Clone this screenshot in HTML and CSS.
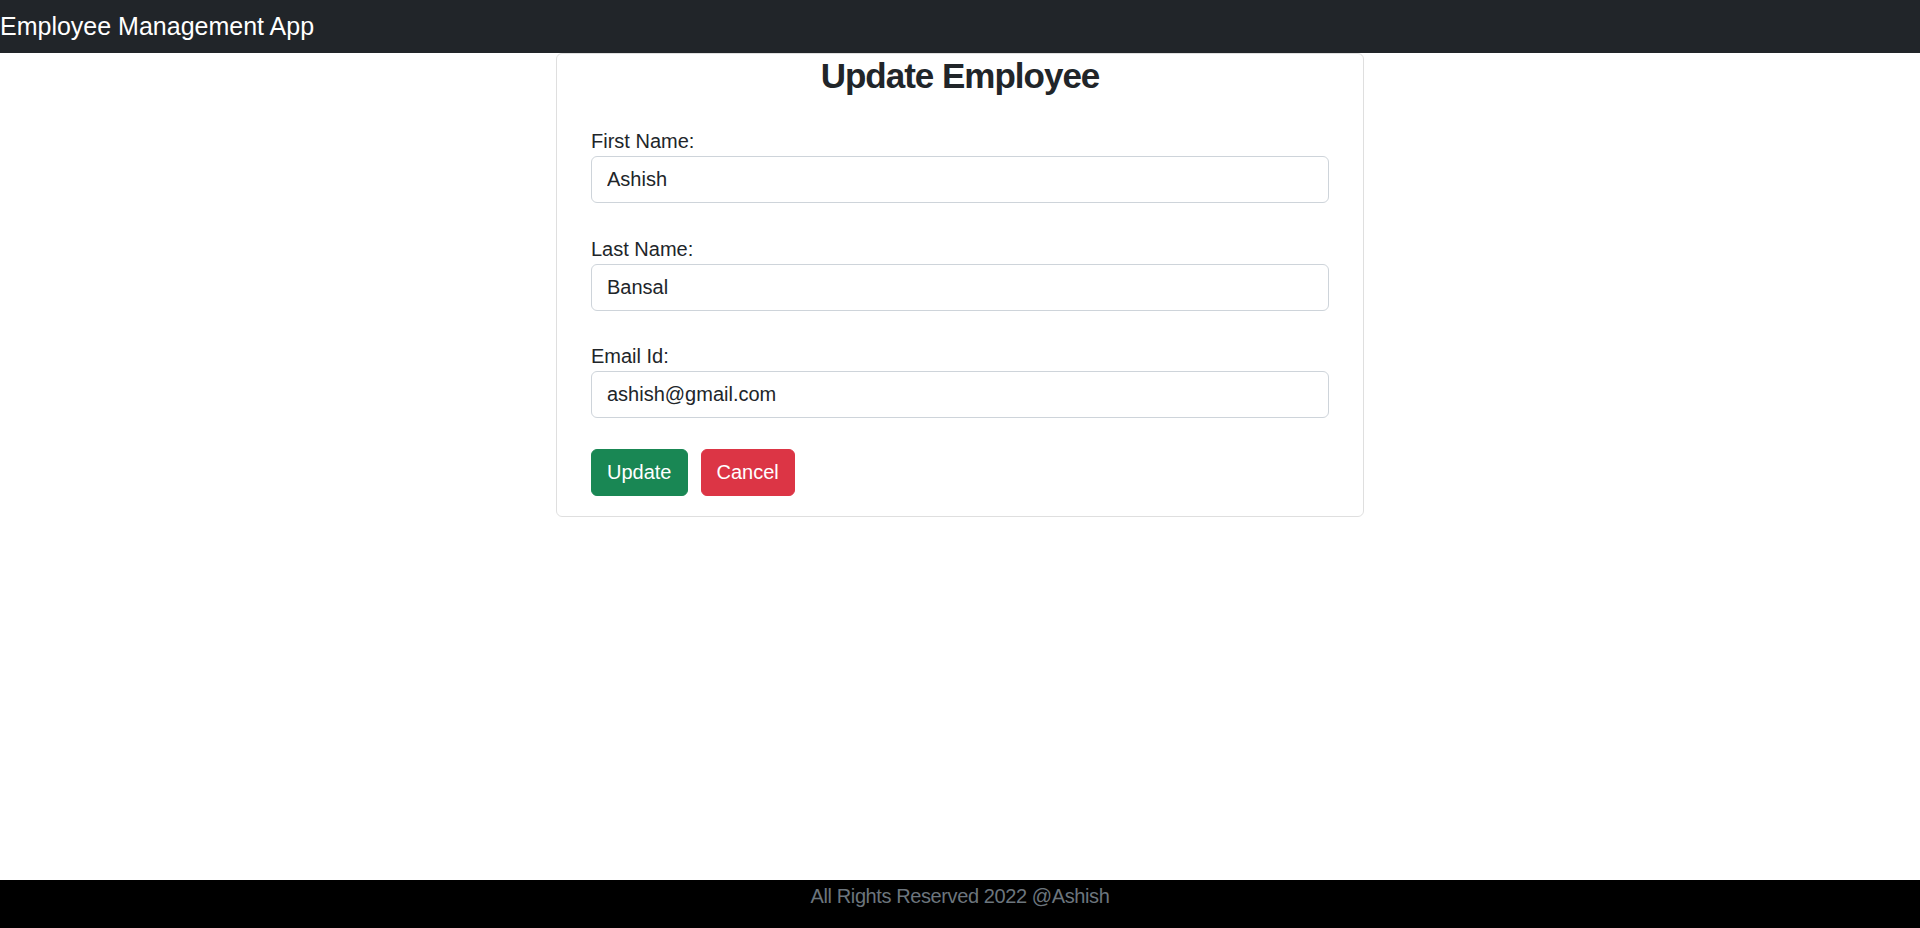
FILE: index.html
```html
<!DOCTYPE html>
<html lang="en">
<head>
<meta charset="utf-8">
<title>Employee Management App</title>
<link rel="stylesheet" href="styles.css">
</head>
<body>
<div class="page">
  <header class="navbar">
    <a class="brand" href="#">Employee Management App</a>
  </header>
  <main class="main">
    <div class="card">
      <h3 class="card-title">Update Employee</h3>
      <form class="form">
        <div class="form-group">
          <label class="form-label">First Name:</label>
          <input class="form-control" type="text" value="Ashish">
        </div>
        <div class="form-group">
          <label class="form-label">Last Name:</label>
          <input class="form-control" type="text" value="Bansal">
        </div>
        <div class="form-group">
          <label class="form-label">Email Id:</label>
          <input class="form-control" type="text" value="ashish@gmail.com">
        </div>
        <div class="actions">
          <button type="button" class="btn btn-success">Update</button>
          <button type="button" class="btn btn-danger">Cancel</button>
        </div>
      </form>
    </div>
  </main>
  <footer class="footer">
    <span class="footer-text">All Rights Reserved 2022 @Ashish</span>
  </footer>
</div>
</body>
</html>
```
FILE: styles.css
```css
* { box-sizing: border-box; }
html, body { margin: 0; padding: 0; }
body {
  font-family: "Liberation Sans", Arial, sans-serif;
  font-size: 20px;
  line-height: 30px;
  color: #212529;
  background: #fff;
}
.page {
  display: flex;
  flex-direction: column;
  min-height: 100vh;
}
.navbar {
  height: 53px;
  background: #212529;
  display: flex;
  align-items: center;
}
.brand {
  color: #fff;
  text-decoration: none;
  font-size: 25px;
  line-height: 37.5px;
}
.main {
  flex: 1;
}
.card {
  width: 808px;
  margin: 0 auto;
  border: 1px solid rgba(0, 0, 0, 0.125);
  border-radius: 6px;
  padding: 1px 34px 20px;
}
.card-title {
  margin: 0 0 29px;
  text-align: center;
  font-size: 35px;
  line-height: 42px;
  font-weight: 700;
  letter-spacing: -1px;
}
.form { margin: 0; }
.form-group {
  margin-bottom: 30.5px;
}
.form-label {
  display: block;
  line-height: 30px;
}
.form-control {
  display: block;
  width: 100%;
  height: 47px;
  padding: 7.5px 15px;
  font-family: inherit;
  font-size: 20px;
  line-height: 30px;
  color: #212529;
  background: #fff;
  border: 1px solid #ced4da;
  border-radius: 6px;
  outline: none;
}
.actions {
  display: flex;
  gap: 13px;
}
.btn {
  font-family: inherit;
  font-size: 20px;
  line-height: 30px;
  padding: 7.5px 15px;
  border: 1px solid transparent;
  border-radius: 6px;
  color: #fff;
  cursor: pointer;
}
.btn-success { background: #198754; border-color: #198754; }
.btn-danger { background: #dc3545; border-color: #dc3545; }
.footer {
  height: 48px;
  background: #000;
  text-align: center;
  padding-top: 1px;
}
.footer-text {
  color: #6c757d;
  line-height: 30px;
  letter-spacing: -0.4px;
}
```
